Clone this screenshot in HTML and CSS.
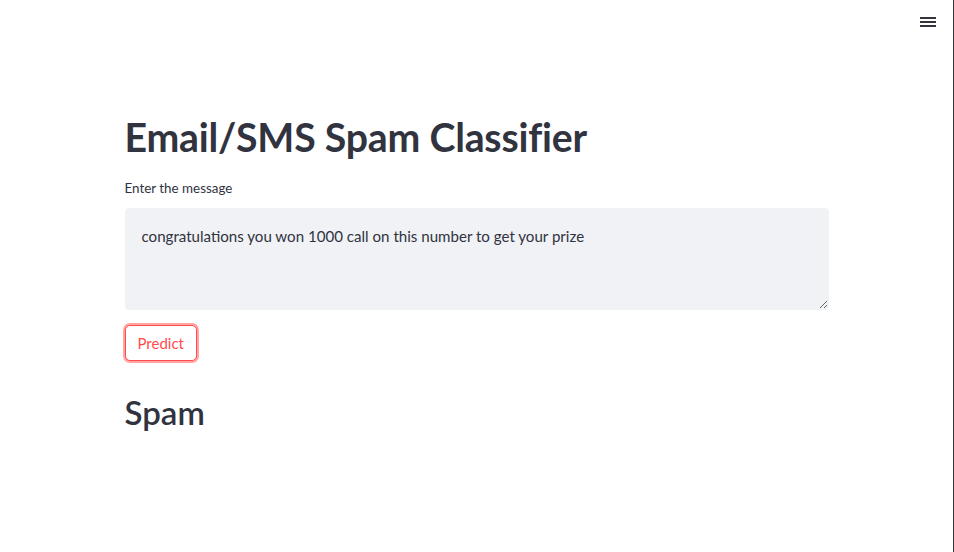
FILE: index.html
```html
<!DOCTYPE html>
<html>
<head>
<meta charset="utf-8">
<link rel="stylesheet" href="styles.css">
</head>
<body>
<div class="app">
  <header class="topbar">
    <button class="menu" aria-label="menu">
      <svg width="16" height="12" viewBox="0 0 16 12"><rect x="0" y="1" width="16" height="2" fill="#31333f"/><rect x="0" y="5" width="16" height="2" fill="#31333f"/><rect x="0" y="9" width="16" height="2" fill="#31333f"/></svg>
    </button>
  </header>
  <main class="main">
    <div class="block">
      <h1 class="title">Email/SMS Spam Classifier</h1>
      <label class="label">Enter the message</label>
      <div class="textwrap">
        <textarea class="input">congratulations you won 1000 call on this number to get your prize</textarea>
      </div>
      <button class="btn">Predict</button>
      <h2 class="result">Spam</h2>
    </div>
  </main>
</div>
</body>
</html>
```
FILE: styles.css
```css
html, body { margin: 0; padding: 0; }
body {
  font-family: "Source Sans Pro", Lato, "Noto Sans", sans-serif;
  color: #31333f;
  background: #fff;
}
.app {
  height: 552px;
  border-right: 1px solid #31333f;
  box-sizing: border-box;
  position: relative;
}
.topbar {
  height: 40px;
  display: flex;
  justify-content: flex-end;
  align-items: center;
}
.menu {
  background: none;
  border: none;
  padding: 0;
  margin: 3px 17px 0 0;
  width: 16px;
  height: 12px;
  display: flex;
}
.main {
  display: flex;
  justify-content: center;
}
.block {
  width: 704px;
  padding-top: 71px;
  display: flex;
  flex-direction: column;
  align-items: flex-start;
}
.title {
  font-size: 39.2px;
  font-weight: 700;
  margin: 0;
  line-height: 52px;
  letter-spacing: -0.2px;
}
.label {
  font-size: 13.4px;
  margin-top: 16px;
  line-height: 18px;
}
.textwrap {
  width: 100%;
  margin-top: 11px;
}
.input {
  display: block;
  width: 100%;
  height: 102px;
  box-sizing: border-box;
  background: #f0f2f6;
  border: 1px solid #f0f2f6;
  border-radius: 4px;
  padding: 15px 16px 16px;
  font-family: inherit;
  font-size: 15.1px;
  color: #31333f;
  line-height: 24px;
  resize: vertical;
}
.btn {
  margin-top: 15px;
  margin-left: 0;
  font-family: inherit;
  font-size: 15px;
  color: #ff4b4b;
  background: #fff;
  border: 1px solid #ff4b4b;
  border-radius: 5px;
  box-shadow: 0 0 0 2px rgba(255, 75, 75, 0.5);
  padding: 0 12px;
  height: 36px;
  line-height: 34px;
}
.result {
  font-size: 33px;
  font-weight: 600;
  margin: 29px 0 0 0;
  line-height: 44px;
}
```
